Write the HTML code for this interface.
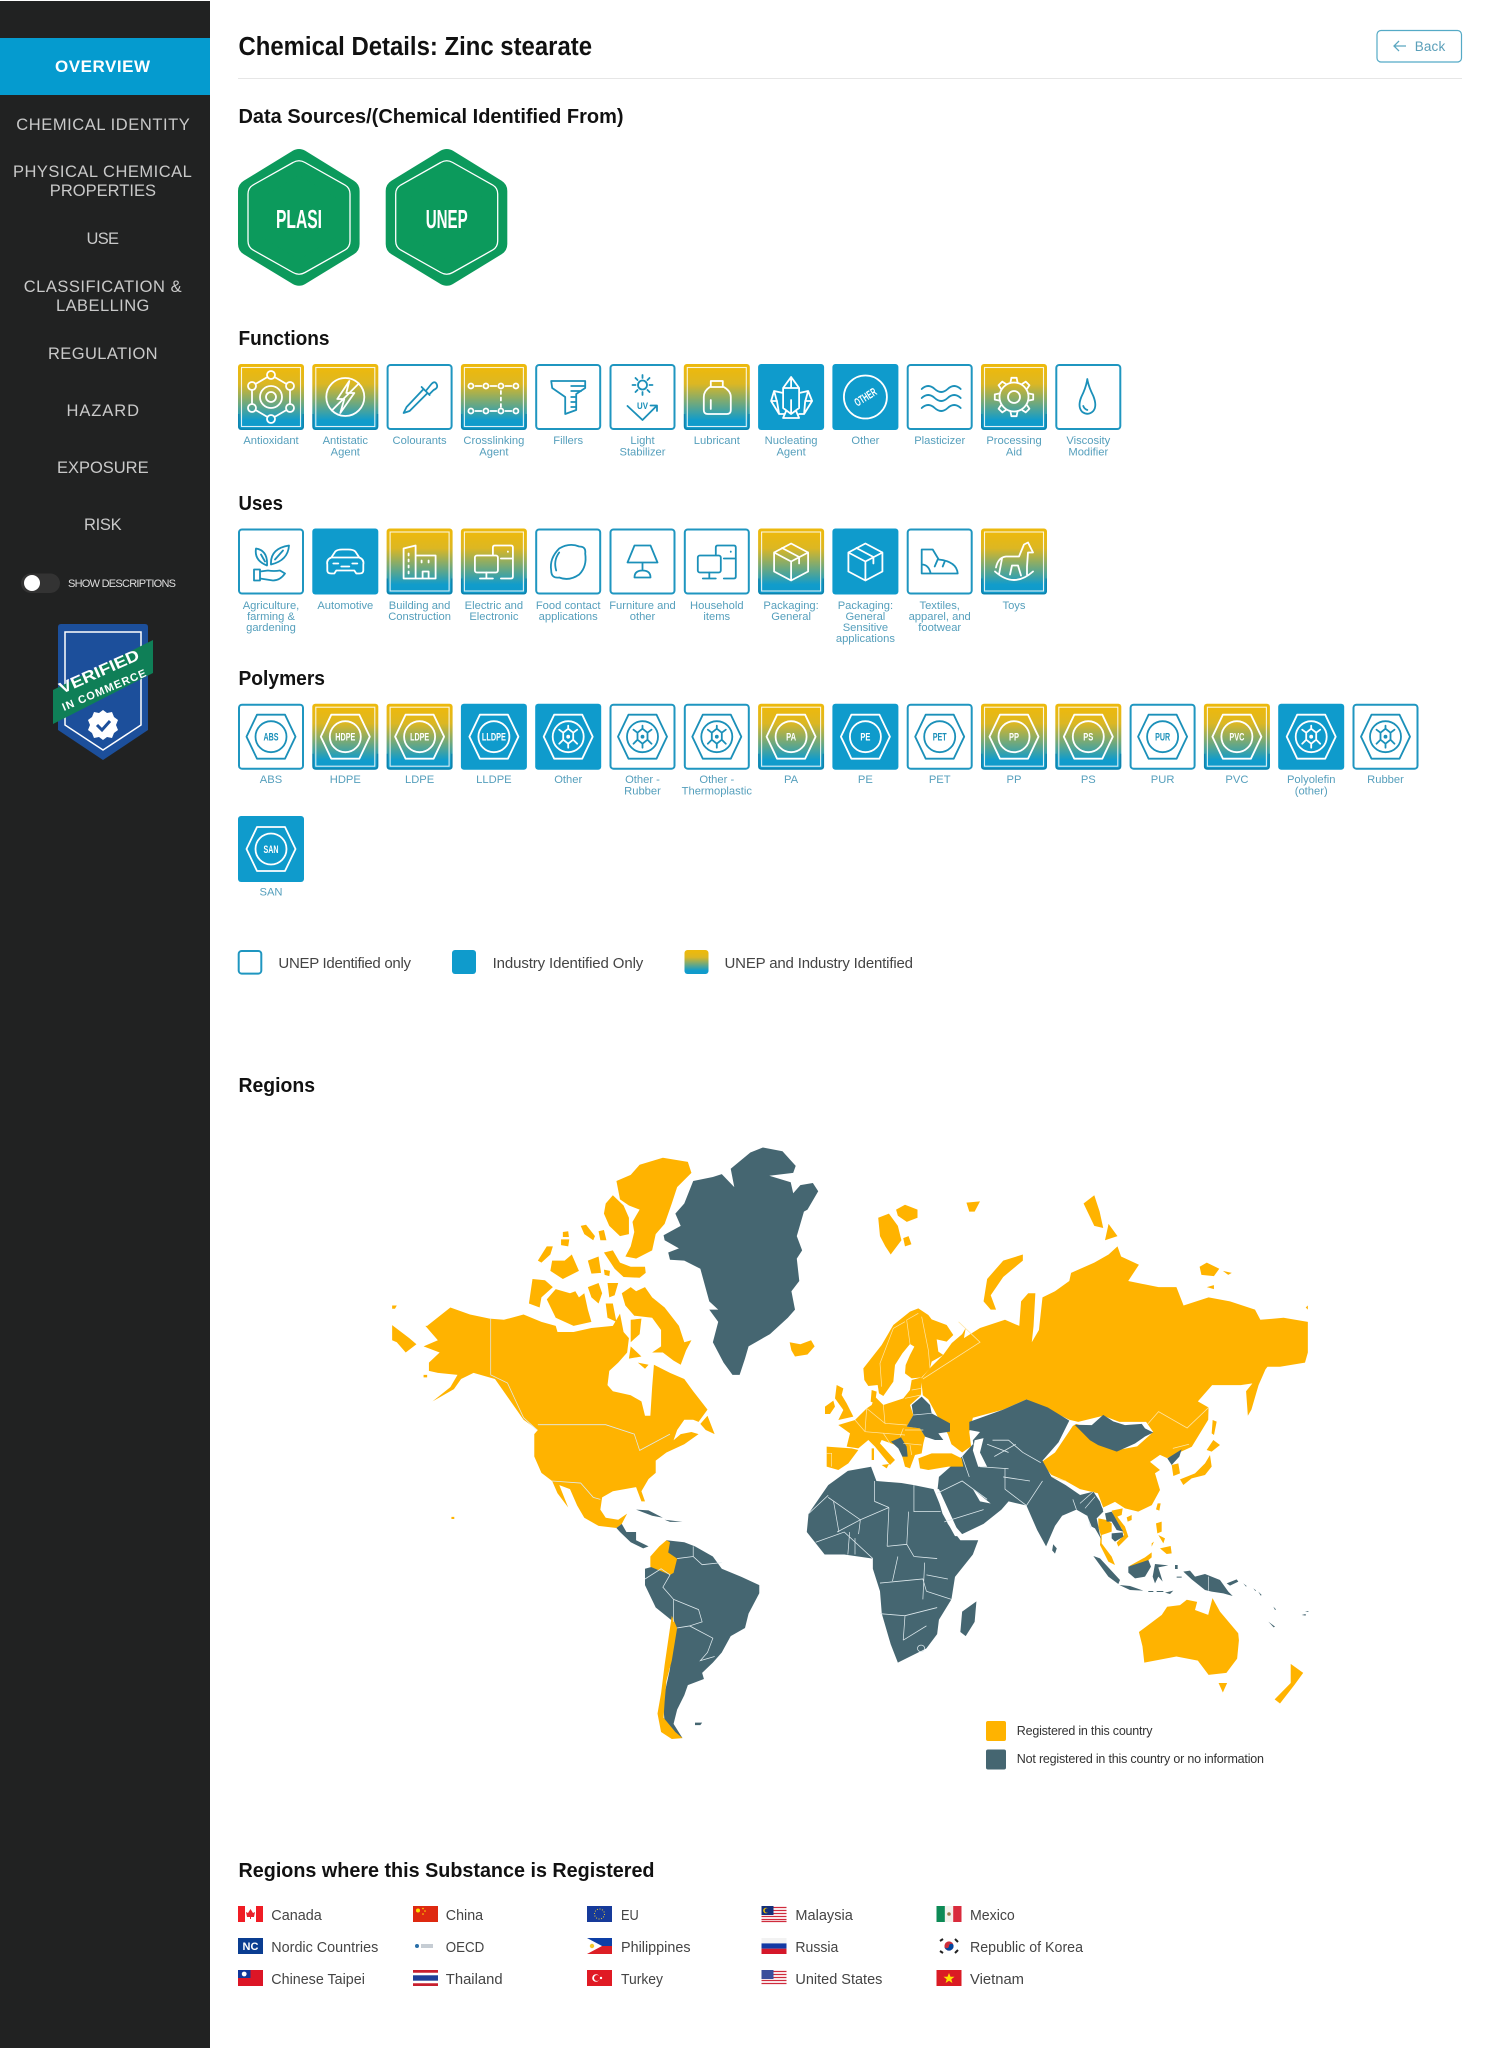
<!DOCTYPE html>
<html lang="en"><head><meta charset="utf-8"><title>Chemical Details: Zinc stearate</title>
<style>
html,body{margin:0;padding:0;background:#fff;width:1490px;height:2048px;overflow:hidden}
svg{display:block}
text{font-family:"Liberation Sans",Arial,sans-serif}
.nav{font-size:16.5px;fill:#c9c9c9}
.h{font-weight:700;fill:#111;font-size:20px}
.l{font-size:11.2px;fill:#559fbc;text-anchor:middle}
.lg{font-size:15px;fill:#444}
.r{font-size:15px;fill:#444}
.ic *{fill:none;stroke:currentColor;stroke-width:1.8;stroke-linejoin:round;stroke-linecap:round}
.nt{font-weight:700;font-size:11px;fill:currentColor;text-anchor:middle}
.w{color:#1b90b9}.c{color:#fff}
.bd{fill:none;stroke:#dfeaee;stroke-width:2}
.by{fill:none;stroke:#ffe6a8;stroke-width:2}
</style></head><body>
<svg width="1490" height="2048" viewBox="0 0 1490 2048" xmlns="http://www.w3.org/2000/svg">
<defs>
<linearGradient id="gr" x1="0" y1="0" x2="0" y2="1"><stop offset="0.08" stop-color="#ecb90e"/><stop offset="0.3" stop-color="#dcb723"/><stop offset="0.85" stop-color="#119ccb"/><stop offset="1" stop-color="#0f9acb"/></linearGradient>
<g id="tw"><rect x="1" y="1" width="64" height="64" rx="3" fill="#fff" stroke="#1f96c0" stroke-width="2"/></g>
<g id="tb"><rect x="0" y="0" width="66" height="66" rx="3" fill="#0f9bcc"/></g>
<g id="tg"><rect x="0" y="0" width="66" height="66" rx="3" fill="url(#gr)"/><rect x="3.5" y="3.5" width="59" height="59" fill="none" stroke="#fff" stroke-width="1.1" stroke-opacity=".85"/><path d="M0.8 50V62Q0.8 65.2 4 65.2H62Q65.2 65.2 65.2 62V50" fill="none" stroke="#0f83ac" stroke-width="1.4"/></g>

<g id="i1" class="ic"><circle cx="33" cy="33" r="5"/><circle cx="33" cy="33" r="11"/><circle cx="33" cy="11" r="4"/><circle cx="52" cy="22" r="4"/><circle cx="52" cy="44" r="4"/><circle cx="33" cy="55" r="4"/><circle cx="14" cy="44" r="4"/><circle cx="14" cy="22" r="4"/><path d="M36.5 13L48.5 20M52 26V40M48.5 46L36.5 53M29.5 53L17.5 46M14 40V26M17.5 20L29.5 13"/></g>
<g id="i2" class="ic"><circle cx="33" cy="33" r="19"/><path d="M19.5 46.5L46.5 19.5M37 17L25 35H32L28 49L42 29H34Z"/></g>
<g id="i3" class="ic"><path d="M37 25L20 43L17 49L23 47L41 29M35 23L43 31M40 26L44 21Q48 16 50 20Q52 24 47 26L43 30"/></g>
<g id="i4" class="ic"><circle cx="10" cy="22" r="2.5"/><circle cx="25" cy="22" r="2.5"/><circle cx="40" cy="22" r="2.5"/><circle cx="55" cy="22" r="2.5"/><circle cx="10" cy="47" r="2.5"/><circle cx="25" cy="47" r="2.5"/><circle cx="40" cy="47" r="2.5"/><circle cx="55" cy="47" r="2.5"/><path d="M14.5 22H20.5M29.5 22H35.5M44.5 22H50.5M14.5 47H20.5M29.5 47H35.5M44.5 47H50.5"/><path d="M40 27V43" stroke-dasharray="3 3.5"/></g>
<g id="i5" class="ic"><path d="M16 17H50V24L41 30V46L30 50V33L17 24ZM36 22H50M36 27H46M36 33H41M36 38H41M36 43H41"/></g>
<g id="i6" class="ic"><circle cx="33" cy="21" r="4.5"/><path d="M33 11V14M33 28V31M23 21H26M40 21H43M26 14L28 16M40 14L38 16M26 28L28 26M40 28L38 26M18 42L33 56L47 42M41 41.500H47.500V47"/><text x="33" y="45" class="nt" style="font-size:9.500px;fill:currentColor;stroke:none" textLength="11" lengthAdjust="spacingAndGlyphs">UV</text></g>
<g id="i7" class="ic"><path d="M27 23V17H39V23M26 23H40Q47 27 47 33V46Q47 50 43 50H24Q20 50 20 46V33Q20 27 26 23ZM27 36V45"/></g>
<g id="i8" class="ic"><path d="M33 13L41 24V44L33 50L25 44V24ZM25 24H41M33 13V24M33 36V50M25 29L16 27L13 37L21 50H26M41 29L50 27L54 37L46 50H41M16 27L19 38L21 50M50 27L47 38L46 50M13 37H19M54 37H47M28 47L25 54H41L38 47"/></g>
<g id="i9" class="ic"><circle cx="33" cy="33" r="21.500"/><text x="33" y="37" transform="rotate(-32 33 33)" class="nt" style="font-size:11.500px;fill:currentColor;stroke:none" textLength="24" lengthAdjust="spacingAndGlyphs">OTHER</text></g>
<g id="i10" class="ic"><path d="M15 25q6.500-6 13 0t13 0t13 0M15 34q6.500-6 13 0t13 0t13 0M15 44q6.500-6 13 0t13 0t13 0"/></g>
<g id="i11" class="ic"><circle cx="33" cy="33" r="6"/><circle cx="33" cy="33" r="14.500"/><g id="th"><path d="M29.400 18.800L30.400 13.800H35.600L36.600 18.800"/></g><use href="#th" transform="rotate(45 33 33)"/><use href="#th" transform="rotate(90 33 33)"/><use href="#th" transform="rotate(135 33 33)"/><use href="#th" transform="rotate(180 33 33)"/><use href="#th" transform="rotate(225 33 33)"/><use href="#th" transform="rotate(270 33 33)"/><use href="#th" transform="rotate(315 33 33)"/></g>
<g id="i12" class="ic"><path d="M32 15Q33 22 38 32Q42 42 38 47Q33 52 27 48Q22 43 26 33Q31 23 32 15ZM28 42Q29 45 32 46"/></g>

<g id="u1" class="ic"><path d="M29 37Q16 32 18 20Q30 22 29 37ZM33 36Q32 20 51 17Q50 32 33 36ZM16 41H22V52H16ZM22 43L30 42Q36 43 42 42L47 45Q42 52 35 52L22 50M23 26L27 33M45 22L37 31"/></g>
<g id="u2" class="ic"><path d="M15 36Q14 31 19 29L23 23Q25 21 30 21H36Q41 21 43 23L47 29Q52 31 51 36V42Q51 45 47 45H44L42 42H24L22 45H19Q15 45 15 42ZM20 29H46M21 35H26M40 35H45M29 38H37"/></g>
<g id="u3" class="ic"><path d="M17 50V20L29 17V50M29 27H49V50H17M36 50V43H42V50"/><path d="M22 25V46" stroke-dasharray="2 4"/><path d="M35 32V38M42 32V38" stroke-dasharray="2 4"/></g>
<g id="u4" class="ic"><rect x="14" y="27" width="23" height="17" rx="2"/><path d="M25.500 44V50M19 50H32M32 26V19Q32 17 34 17H50Q52 17 52 19V48Q52 50 50 50H40M40 30H52M47 23V23.400"/></g>
<g id="u5" class="ic"><path d="M24 20Q34 14 44 18Q51 18 50 25Q52 38 44 46Q34 53 24 49Q16 50 16 42Q14 30 24 20ZM24 24Q18 32 21 42"/></g>
<g id="u6" class="ic"><path d="M25 17H41L48 34H18ZM33 34V42M25 49Q25 42 33 42Q41 42 41 49Z"/></g>
<g id="u7" class="ic"><path d="M33 15L50 24V43L33 52L16 43V24ZM16 24L33 33L50 24M33 33V52M24 19.500L41 28.500V35"/></g>
<g id="u8" class="ic"><path d="M15 21H26L32 31Q50 33 51 45H15ZM15 36Q22 36 24 45M31 31L28 38M38 33L36 38"/></g>
<g id="u9" class="ic"><path d="M15 39Q17 29 25 28H38L43 16L47 14L52 24L47 24L46 38V46M21 30L18 46M29 46L31 37H37L40 47M14 43Q33 60 52 43"/></g>

<g id="n" class="ic"><path d="M8.500 33L19 11H47L57.500 33L47 55H19Z"/><circle cx="33" cy="33" r="15.500"/></g>
<g id="m" class="ic"><path d="M8.500 33L19 11H47L57.500 33L47 55H19Z"/><circle cx="33" cy="33" r="15.500"/><path d="M33 25L38 29V36L33 40L28 36V29ZM28 29L24 26M38 29L42 26M28 36L24 40M38 36L42 40M33 25V22M33 40V44"/><circle cx="33" cy="33" r="1"/></g>

<polygon id="hx" points="61,12 109.600,42 109.600,95 61,124.700 12,95 12,42" fill="#0c9a5c" stroke="#0c9a5c" stroke-width="24" stroke-linejoin="round"/>
<path id="hi" d="M55 13.500Q61 10 67 13.500L107 36Q112 39 112 45V92Q112 98 107 101L67 123.500Q61 127 55 123.500L15 101Q10 98 10 92V45Q10 39 15 36Z" fill="none" stroke="#fff" stroke-width="1.300"/>
</defs>

<rect width="1490" height="2048" fill="#fff"/>
<rect x="0" y="1" width="210" height="2047" fill="#212222"/>
<rect x="0" y="38" width="210" height="57" fill="#059bcf"/>
<text x="55" y="72" font-size="17" font-weight="700" fill="#fff" textLength="95">OVERVIEW</text>
<text class="nav" x="16.300" y="130" textLength="173.500">CHEMICAL IDENTITY</text>
<text class="nav" x="13" y="177" textLength="178.800">PHYSICAL CHEMICAL</text>
<text class="nav" x="49.800" y="196" textLength="106.200">PROPERTIES</text>
<text class="nav" x="86.500" y="244" textLength="32.500">USE</text>
<text class="nav" x="23.700" y="292" textLength="157.900">CLASSIFICATION &amp;</text>
<text class="nav" x="56" y="311" textLength="93.400">LABELLING</text>
<text class="nav" x="48" y="359" textLength="109.600">REGULATION</text>
<text class="nav" x="66.500" y="416" textLength="72.500">HAZARD</text>
<text class="nav" x="57" y="473" textLength="91.600">EXPOSURE</text>
<text class="nav" x="84" y="530" textLength="37.600">RISK</text>
<rect x="21" y="573.500" width="39" height="19.500" rx="9.750" fill="#333"/>
<circle cx="32" cy="583" r="8" fill="#fff"/>
<text x="68" y="587" font-size="11" fill="#dedede" textLength="108">SHOW DESCRIPTIONS</text>

<path d="M61 624H145Q148 624 148 627V730L103 760L58 730V627Q58 624 61 624Z" fill="#1c4f9b"/>
<path d="M65 632H141V725L103 750L65 725Z" fill="none" stroke="#fff" stroke-width="1.500"/>
<path d="M53 690L153 640V673L53 724Z" fill="#0f7f57"/>
<text x="62" y="694" transform="rotate(-24 62 694)" font-size="16" font-weight="700" fill="#fff" textLength="86" lengthAdjust="spacingAndGlyphs">VERIFIED</text>
<text x="64" y="711" transform="rotate(-23 64 711)" font-size="11" font-weight="700" fill="#fff" textLength="90">IN COMMERCE</text>
<path d="M103 710L107 713L112 712L114 717L118 720L116 725L118 730L114 733L112 738L107 737L103 740L99 737L94 738L92 733L88 730L90 725L88 720L92 717L94 712L99 713Z" fill="#fff"/>
<path d="M97 725L102 730L110 721" fill="none" stroke="#1c4f9b" stroke-width="3"/>

<text x="238.500" y="55" font-size="25.500" font-weight="700" fill="#111" textLength="353.500" lengthAdjust="spacingAndGlyphs">Chemical Details: Zinc stearate</text>
<rect x="238" y="78" width="1224" height="1" fill="#e6e6e6"/>
<rect x="1377" y="30.500" width="84.500" height="31.500" rx="4" fill="#fff" stroke="#55aac6" stroke-width="1.200"/>
<path d="M1406 46H1394M1399 41L1394 46L1399 51" fill="none" stroke="#5aa6c0" stroke-width="1.300"/>
<text x="1414.700" y="51" font-size="13.500" fill="#5a9fb9" textLength="30.500">Back</text>

<text class="h" x="238.500" y="123" textLength="385" lengthAdjust="spacingAndGlyphs">Data Sources/(Chemical Identified From)</text>
<g transform="translate(238 149)"><use href="#hx"/><use href="#hi"/><text x="38" y="79" font-size="26" font-weight="700" fill="#fff" textLength="46" lengthAdjust="spacingAndGlyphs">PLASI</text></g>
<g transform="translate(385.700 149)"><use href="#hx"/><use href="#hi"/><text x="40" y="79" font-size="26" font-weight="700" fill="#fff" textLength="42" lengthAdjust="spacingAndGlyphs">UNEP</text></g>

<text class="h" x="238.500" y="345" textLength="91" lengthAdjust="spacingAndGlyphs">Functions</text>
<g transform="translate(238 364)">
<g class="c" transform="translate(0 0)"><use href="#tg"/><use href="#i1"/></g>
<g class="c" transform="translate(74.300 0)"><use href="#tg"/><use href="#i2"/></g>
<g class="w" transform="translate(148.600 0)"><use href="#tw"/><use href="#i3"/></g>
<g class="c" transform="translate(222.900 0)"><use href="#tg"/><use href="#i4"/></g>
<g class="w" transform="translate(297.200 0)"><use href="#tw"/><use href="#i5"/></g>
<g class="w" transform="translate(371.500 0)"><use href="#tw"/><use href="#i6"/></g>
<g class="c" transform="translate(445.800 0)"><use href="#tg"/><use href="#i7"/></g>
<g class="c" transform="translate(520.100 0)"><use href="#tb"/><use href="#i8"/></g>
<g class="c" transform="translate(594.400 0)"><use href="#tb"/><use href="#i9"/></g>
<g class="w" transform="translate(668.700 0)"><use href="#tw"/><use href="#i10"/></g>
<g class="c" transform="translate(743 0)"><use href="#tg"/><use href="#i11"/></g>
<g class="w" transform="translate(817.300 0)"><use href="#tw"/><use href="#i12"/></g>
</g>
<g>
<text class="l" x="271" y="444">Antioxidant</text>
<text class="l" x="345.300" y="444">Antistatic</text><text class="l" x="345.300" y="455.500">Agent</text>
<text class="l" x="419.600" y="444">Colourants</text>
<text class="l" x="493.900" y="444">Crosslinking</text><text class="l" x="493.900" y="455.500">Agent</text>
<text class="l" x="568.200" y="444">Fillers</text>
<text class="l" x="642.500" y="444">Light</text><text class="l" x="642.500" y="455.500">Stabilizer</text>
<text class="l" x="716.800" y="444">Lubricant</text>
<text class="l" x="791.100" y="444">Nucleating</text><text class="l" x="791.100" y="455.500">Agent</text>
<text class="l" x="865.400" y="444">Other</text>
<text class="l" x="939.700" y="444">Plasticizer</text>
<text class="l" x="1014" y="444">Processing</text><text class="l" x="1014" y="455.500">Aid</text>
<text class="l" x="1088.300" y="444">Viscosity</text><text class="l" x="1088.300" y="455.500">Modifier</text>
</g>

<text class="h" x="238.500" y="510" textLength="44.500" lengthAdjust="spacingAndGlyphs">Uses</text>
<g transform="translate(238 528.500)">
<g class="w" transform="translate(0 0)"><use href="#tw"/><use href="#u1"/></g>
<g class="c" transform="translate(74.300 0)"><use href="#tb"/><use href="#u2"/></g>
<g class="c" transform="translate(148.600 0)"><use href="#tg"/><use href="#u3"/></g>
<g class="c" transform="translate(222.900 0)"><use href="#tg"/><use href="#u4"/></g>
<g class="w" transform="translate(297.200 0)"><use href="#tw"/><use href="#u5"/></g>
<g class="w" transform="translate(371.500 0)"><use href="#tw"/><use href="#u6"/></g>
<g class="w" transform="translate(445.800 0)"><use href="#tw"/><use href="#u4"/></g>
<g class="c" transform="translate(520.100 0)"><use href="#tg"/><use href="#u7"/></g>
<g class="c" transform="translate(594.400 0)"><use href="#tb"/><use href="#u7"/></g>
<g class="w" transform="translate(668.700 0)"><use href="#tw"/><use href="#u8"/></g>
<g class="c" transform="translate(743 0)"><use href="#tg"/><use href="#u9"/></g>
</g>
<g>
<text class="l" x="271" y="609">Agriculture,</text><text class="l" x="271" y="620">farming &amp;</text><text class="l" x="271" y="631">gardening</text>
<text class="l" x="345.300" y="609">Automotive</text>
<text class="l" x="419.600" y="609">Building and</text><text class="l" x="419.600" y="620">Construction</text>
<text class="l" x="493.900" y="609">Electric and</text><text class="l" x="493.900" y="620">Electronic</text>
<text class="l" x="568.200" y="609">Food contact</text><text class="l" x="568.200" y="620">applications</text>
<text class="l" x="642.500" y="609">Furniture and</text><text class="l" x="642.500" y="620">other</text>
<text class="l" x="716.800" y="609">Household</text><text class="l" x="716.800" y="620">items</text>
<text class="l" x="791.100" y="609">Packaging:</text><text class="l" x="791.100" y="620">General</text>
<text class="l" x="865.400" y="609">Packaging:</text><text class="l" x="865.400" y="620">General</text><text class="l" x="865.400" y="631">Sensitive</text><text class="l" x="865.400" y="642">applications</text>
<text class="l" x="939.700" y="609">Textiles,</text><text class="l" x="939.700" y="620">apparel, and</text><text class="l" x="939.700" y="631">footwear</text>
<text class="l" x="1014" y="609">Toys</text>
</g>

<text class="h" x="238.500" y="685" textLength="86.500" lengthAdjust="spacingAndGlyphs">Polymers</text>
<g transform="translate(238 703.700)">
<g class="w" transform="translate(0 0)"><use href="#tw"/><use href="#n"/><text class="nt" x="33" y="37" textLength="15" lengthAdjust="spacingAndGlyphs">ABS</text></g>
<g class="c" transform="translate(74.300 0)"><use href="#tg"/><use href="#n"/><text class="nt" x="33" y="37" textLength="20" lengthAdjust="spacingAndGlyphs">HDPE</text></g>
<g class="c" transform="translate(148.600 0)"><use href="#tg"/><use href="#n"/><text class="nt" x="33" y="37" textLength="19" lengthAdjust="spacingAndGlyphs">LDPE</text></g>
<g class="c" transform="translate(222.900 0)"><use href="#tb"/><use href="#n"/><text class="nt" x="33" y="37" textLength="24" lengthAdjust="spacingAndGlyphs">LLDPE</text></g>
<g class="c" transform="translate(297.200 0)"><use href="#tb"/><use href="#m"/></g>
<g class="w" transform="translate(371.500 0)"><use href="#tw"/><use href="#m"/></g>
<g class="w" transform="translate(445.800 0)"><use href="#tw"/><use href="#m"/></g>
<g class="c" transform="translate(520.100 0)"><use href="#tg"/><use href="#n"/><text class="nt" x="33" y="37" textLength="10" lengthAdjust="spacingAndGlyphs">PA</text></g>
<g class="c" transform="translate(594.400 0)"><use href="#tb"/><use href="#n"/><text class="nt" x="33" y="37" textLength="10" lengthAdjust="spacingAndGlyphs">PE</text></g>
<g class="w" transform="translate(668.700 0)"><use href="#tw"/><use href="#n"/><text class="nt" x="33" y="37" textLength="14" lengthAdjust="spacingAndGlyphs">PET</text></g>
<g class="c" transform="translate(743 0)"><use href="#tg"/><use href="#n"/><text class="nt" x="33" y="37" textLength="10" lengthAdjust="spacingAndGlyphs">PP</text></g>
<g class="c" transform="translate(817.300 0)"><use href="#tg"/><use href="#n"/><text class="nt" x="33" y="37" textLength="10" lengthAdjust="spacingAndGlyphs">PS</text></g>
<g class="w" transform="translate(891.600 0)"><use href="#tw"/><use href="#n"/><text class="nt" x="33" y="37" textLength="15" lengthAdjust="spacingAndGlyphs">PUR</text></g>
<g class="c" transform="translate(965.900 0)"><use href="#tg"/><use href="#n"/><text class="nt" x="33" y="37" textLength="15" lengthAdjust="spacingAndGlyphs">PVC</text></g>
<g class="c" transform="translate(1040.200 0)"><use href="#tb"/><use href="#m"/></g>
<g class="w" transform="translate(1114.500 0)"><use href="#tw"/><use href="#m"/></g>
<g class="c" transform="translate(0 112.300)"><use href="#tb"/><use href="#n"/><text class="nt" x="33" y="37" textLength="15" lengthAdjust="spacingAndGlyphs">SAN</text></g>
</g>
<g>
<text class="l" x="271" y="783">ABS</text>
<text class="l" x="345.300" y="783">HDPE</text>
<text class="l" x="419.600" y="783">LDPE</text>
<text class="l" x="493.900" y="783">LLDPE</text>
<text class="l" x="568.200" y="783">Other</text>
<text class="l" x="642.500" y="783">Other -</text><text class="l" x="642.500" y="794.300">Rubber</text>
<text class="l" x="716.800" y="783">Other -</text><text class="l" x="716.800" y="794.300">Thermoplastic</text>
<text class="l" x="791.100" y="783">PA</text>
<text class="l" x="865.400" y="783">PE</text>
<text class="l" x="939.700" y="783">PET</text>
<text class="l" x="1014" y="783">PP</text>
<text class="l" x="1088.300" y="783">PS</text>
<text class="l" x="1162.600" y="783">PUR</text>
<text class="l" x="1236.900" y="783">PVC</text>
<text class="l" x="1311.200" y="783">Polyolefin</text><text class="l" x="1311.200" y="794.300">(other)</text>
<text class="l" x="1385.500" y="783">Rubber</text>
<text class="l" x="271" y="895.500">SAN</text>
</g>

<rect x="238.700" y="951" width="22.600" height="22.600" rx="3" fill="#fff" stroke="#1f96c0" stroke-width="2"/>
<text class="lg" x="278.400" y="968" textLength="132.600">UNEP Identified only</text>
<rect x="452" y="950" width="24" height="24" rx="3" fill="#0f9bcc"/>
<text class="lg" x="492.600" y="968" textLength="150.700">Industry Identified Only</text>
<rect x="684.500" y="950" width="24" height="24" rx="3" fill="url(#gr)"/>
<text class="lg" x="724.500" y="968" textLength="188.500">UNEP and Industry Identified</text>

<text class="h" x="238.500" y="1092" textLength="76.500" lengthAdjust="spacingAndGlyphs">Regions</text>

<!-- MAP: Americas -->
<g transform="translate(370 1130) scale(.35714 .40816)">
<path fill="#456671" d="M1065 55L1100 43L1155 52L1192 88L1185 105L1118 112L1178 128L1185 155L1205 135L1240 130L1255 150L1225 195L1215 200L1195 260L1210 295L1195 315L1202 370L1180 395L1190 440L1170 460L1120 500L1060 530L1050 560L1035 600L1015 600L990 570L960 520L975 470L950 440L975 440L950 420L925 340L880 320L840 318L835 300L865 290L825 270L822 258L870 235L855 205L880 180L905 125L960 115L985 108L1020 140L1010 95Z"/>
<path fill="#ffb300" d="M755 85L820 68L890 78L900 105L860 140L845 180L825 230L800 255L790 295L745 315L715 310L730 285L740 250L735 225L755 195L725 185L700 170L690 125L730 110Z
M660 180L680 160L710 185L725 215L725 255L700 260L670 235L655 205Z
M590 235L605 232L630 260L625 270L600 255ZM640 248L655 245L662 270L645 270ZM540 250L555 248L557 262L540 262ZM535 268L558 268L555 285L535 282Z
M655 300L680 295L700 325L730 335L770 335L772 350L755 362L710 360L685 340ZM470 320L495 285L512 285L505 305L480 325ZM510 320L545 320L565 305L585 345L540 365L505 345ZM610 320L640 310L647 350L620 352ZM655 342L672 345L670 358L657 355Z
M455 365L490 368L512 385L480 410L475 435L445 425ZM495 415L520 390L560 400L575 395L585 410L600 400L610 440L620 470L570 480L520 460ZM610 385L640 375L650 400L640 425L620 410ZM665 375L695 375L685 405L670 410Z
M705 400L730 385L745 395L770 385L790 410L825 435L865 480L880 520L900 515L885 540L870 575L850 565L820 545L790 545L815 530L815 490L790 460L740 455L715 430ZM660 425L680 425L690 470L665 460ZM730 465L760 462L755 500L730 520ZM730 530L760 555L725 560ZM750 570L780 575L770 585Z
M160 480L225 435L280 452L335 462L375 465L430 452L480 470L520 480L525 495L570 495L620 485L680 480L700 450L710 495L725 510L720 545L695 570L670 590L665 625L680 640L730 650L760 665L770 700L785 700L790 630L795 575L840 595L880 610L905 640L945 685L920 715L905 710L880 710L860 735L850 760L870 745L900 740L920 745L880 770L830 790L800 810L800 840L780 855L760 885L770 910L760 910L745 875L680 885L650 900L645 930L660 950L695 955L720 940L705 965L690 975L640 970L600 950L580 920L560 880L530 870L555 925L525 890L510 860L480 840L460 800L460 745L470 735L430 710L390 660L350 610L290 595L255 610L235 635L175 665L225 630L245 600L190 595L165 590L165 570L195 545L150 530L190 515L155 480Z
M62 478L110 510L130 525L100 545L75 520L62 515ZM62 430L75 430L70 438L62 438ZM925 720L945 700L965 745L940 735ZM1175 520L1205 525L1235 515L1245 530L1225 550L1190 555L1180 540ZM150 600L160 600L160 606L150 606ZM228 948h8v5h-8Z"/>
<circle cx="797" cy="495" r="7" fill="#fff"/>
<path class="bd" d="M338 462V600L385 620L430 705L468 735M470 722H660L740 745L755 785L840 745M510 860L590 865L625 900L645 905"/>
<path fill="#456671" d="M690 975L705 965L718 985L745 985L745 1005L780 1020L765 1025L730 1010L700 985ZM745 930L780 932L820 950L790 945ZM825 955L875 960L840 960ZM910 1452L930 1452L925 1458L910 1458Z
M830 1005L880 1010L910 1020L960 1045L985 1075L1040 1095L1090 1115L1090 1135L1060 1185L1050 1220L1010 1240L985 1280L960 1305L930 1330L935 1345L890 1360L880 1385L860 1420L850 1455L875 1490L850 1480L825 1450L820 1400L840 1320L850 1205L800 1170L770 1115L770 1075L790 1070L830 1010Z"/>
<path fill="#ffb300" d="M785 1045L810 1020L830 1005L840 1010L835 1035L860 1050L850 1085L840 1090L785 1070Z
M845 1190L860 1220L845 1300L830 1350L825 1400L822 1440L855 1475L875 1490L845 1492L815 1475L805 1430L815 1380L825 1310Z"/>
<path class="bd" d="M770 1100L815 1075L840 1090L820 1120L850 1150L850 1205M850 1150L920 1175L930 1205L895 1215L960 1245L945 1280L925 1300L965 1290M860 1220L895 1215M860 1050L905 1045L930 1065L985 1060M905 1020L905 1045"/>
</g>

<!-- MAP: Eurasia/Africa/Oceania -->
<g transform="translate(780 1130) scale(.35714 .40816)">
<path fill="#ffb300" d="M275 215L305 205L330 235L340 270L310 305L295 285L280 260ZM325 195L350 183L385 195L385 215L355 225L330 210ZM345 265L360 260L368 280L350 285ZM522 178L560 175L545 200L530 200Z
M570 420L580 365L625 320L680 305L680 320L625 360L590 405L605 440L590 440Z
M850 180L880 160L895 200L905 240L880 235ZM920 230L945 260L910 270ZM1175 335L1195 325L1230 340L1215 358L1180 355ZM1240 345L1265 350L1255 355ZM1195 385L1215 380L1215 390ZM1472 435L1478 430L1478 440Z
M420 583L457 551L481 522L510 500L520 485L515 510L560 485L630 465L670 480L675 420L695 400L715 400L710 480L705 520L725 490L735 410L770 395L810 370L815 350L880 325L920 305L945 285L955 310L1005 330L975 370L1060 385L1110 385L1130 430L1200 410L1260 420L1330 440L1345 465L1410 460L1478 470L1478 545L1470 570L1400 580L1365 580L1330 620L1290 625L1210 625L1170 665L1200 680L1199 710L1153 776L1084 804L1064 796L1036 813L1064 833L1050 841L1064 882L1041 919L1003 935L966 927L938 911L905 925L890 890L840 880L800 860L760 845L730 815L770 790L820 725L830 720L890 740L940 785L1000 775L1045 740L1025 715L950 715L905 700L835 715L810 710L740 680L690 660L625 685L540 705L530 740L535 775L510 790L480 770L470 745L440 700L415 660L400 650L395 610Z
M1305 640L1365 575L1340 625L1320 685L1310 700Z
M1005 1230L1069 1188L1084 1168L1120 1164L1139 1151L1168 1156L1162 1176L1199 1188L1211 1147L1232 1180L1283 1233L1285 1250L1280 1295L1250 1330L1200 1335L1170 1300L1110 1290L1020 1305L1015 1265ZM1228 1355L1252 1355L1240 1378ZM1430 1308L1465 1330L1440 1360L1400 1405L1385 1395L1430 1355Z"/>
<path class="by" d="M500 470L560 520L400 610M740 845L800 860M1200 680L1140 730L1060 690L1030 720M1145 770L1100 780"/>
<path fill="#456671" d="M530 715L625 685L690 660L750 680L810 712L780 765L735 810L760 850L800 870L850 900L880 890L905 930L880 925L860 945L830 930L790 945L770 970L745 1020L720 980L690 920L640 910L620 930L570 965L510 990L480 960L440 890L445 850L510 800L540 770L575 815L575 830L545 800L540 760L560 740L530 735Z
M825 722L873 723L905 698L933 714L966 723L1013 720L1022 731L1045 741L1022 751L994 768L943 788L891 772L868 760Z
M80 940L135 870L190 835L255 825L270 860L340 865L375 870L430 880L470 965L505 1005L555 1005L540 1040L490 1095L480 1150L445 1200L440 1235L410 1270L330 1305L310 1260L285 1185L280 1130L260 1075L260 1050L180 1040L125 1040L75 985Z
M505 1230L510 1180L550 1155L545 1205L520 1240ZM765 1015L775 1025L770 1038L762 1030Z"/>
<path fill="#fff" d="M545 760L570 755L560 790L580 825L555 825L540 785ZM540 880L590 915L560 910ZM435 880L445 880L505 995L490 995L455 940Z"/>
<path class="bd" d="M135 900L225 955M150 910L165 985M265 860L265 910L305 925M375 870V935H450M305 925L300 1020M225 955L305 925M80 940L135 895M160 985L225 955L220 990M190 1040L195 985M300 1020L355 1015L375 1045M355 1015L360 935M440 1050L375 1045M280 1110L400 1100L410 1130M280 1185L350 1190L345 1250M350 1190L440 1170M330 1045L315 1105M405 1060L400 1150M470 1100L410 1090M100 1010L180 985L260 1050M210 1000V1040M410 1130L480 1150M345 1250L410 1215M395 1262a10 8 0 1 0 .1 0M595 760H640L680 790M630 830V880L690 920M560 825L640 830M680 790L730 815M735 860L690 920M440 890L510 860L580 905M510 800L530 850M460 960L570 930M580 770L640 790M850 900L870 975M820 905L830 930M600 800L660 770M625 850L700 860"/>
</g>

<!-- MAP: Europe detail -->
<g transform="translate(815 1290) scale(.33333)">
<path fill="#ffb300" d="M145 235L200 165L235 105L285 65L310 55L340 75L350 88L395 105L415 135L395 155L365 148L370 185L385 195L350 215L345 235L320 262L290 265L270 250L272 225L285 195L298 170L285 162L262 190L240 225L235 275L205 318L192 310L188 285L160 288L148 270Z
M290 270L320 262L318 315L285 345L265 325L285 300Z
M70 405L120 390L135 375L155 355L170 345L180 320L205 345L265 325L285 345L295 375L275 410L315 415L330 440L325 460L320 490L300 495L285 535L270 530L262 500L255 470L200 450L195 460L240 510L225 525L180 470L160 450L130 475L95 470L105 430Z
M170 300L185 305L180 340L167 335Z
M35 470L110 475L130 480L100 520L70 540L35 530Z
M65 285L85 295L80 315L95 340L115 380L70 390L85 360L60 325ZM30 350L55 332L60 350L45 372L30 372Z
M170 475L177 475L177 510L170 510ZM200 525L222 522L215 535Z
M310 505L350 490L410 490L440 505L445 530L400 530L340 540L315 535Z"/>
<path fill="#456671" d="M290 345L320 320L345 345L350 370L405 400L405 425L370 430L385 450L360 450L330 440L315 415L275 410L295 375Z
M228 455L258 442L275 470L278 500L262 500L250 475Z"/>
<path class="by" d="M200 290L195 220L235 115L270 95M285 162L275 90L310 70M345 235L340 180L320 80M290 300L320 295M270 325L318 315M155 355L150 425M155 355L210 400L205 345M210 400L275 405M150 425L270 435M205 430L225 460M265 415L255 440M270 420L325 420M265 460L320 465M120 390L150 425M35 490L50 490V530M285 465L290 495"/>
<path class="bd" d="M295 375L350 370"/>
</g>

<!-- MAP: SE Asia detail -->
<g transform="translate(1080 1420) scale(.33333)">
<path fill="#ffb300" d="M300 178L345 160L375 130L390 105L395 140L375 165L335 175L310 195ZM380 90L400 60L420 75L395 95ZM398 0L410 5L402 45L395 40Z
M275 135L295 130L300 160L280 168ZM233 250L242 250L238 272L228 268Z
M228 310L245 305L245 335L232 340ZM235 345L255 355L250 370ZM240 385L272 378L275 400L260 402ZM215 370L222 365L215 380Z
M148 438L195 412L215 397L215 412L200 425L165 440Z
M55 295L80 300L95 310L95 335L80 340L65 345L65 370L95 410L105 435L85 425L60 375L62 345L55 320Z
M95 272L128 265L125 285L112 290L135 320L145 350L115 380L110 368L132 345L125 325L105 300ZM140 292L155 285L155 300L143 305Z"/>
<path fill="#456671" d="M262 115L305 88L298 110L275 135Z
M0 225L40 215L60 245L70 275L50 295L55 320L60 345L65 360L45 325L35 320L15 270L0 265Z
M75 280L95 275L115 310L130 335L110 330L95 305L80 305ZM95 340L128 337L130 350L105 365L95 355Z
M145 440L205 420L213 440L195 470L165 475L145 458Z
M40 408L60 415L120 480L115 492L85 470ZM118 495L150 498L190 512L150 510Z
M225 432L265 436L235 442L248 485L235 470L225 490L218 470Z
M205 513h15v3h-15ZM230 513h20v3h-20ZM255 518L280 512L270 522ZM285 435h8v12h-8ZM290 470h15v3h-15Z
M310 455L330 452L345 470L375 462L420 480L445 515L458 528L430 520L395 515L375 510L335 478Z
M440 490L470 478L475 485L450 497ZM490 490l10 8-2 2ZM520 505l8 6-2 2ZM535 515l10 10-3 2ZM580 560l8 8-3 2ZM565 605l20 15-4 2ZM665 585l12-3 0 5ZM675 575l10-2 0 3Z"/>
<path class="bd" d="M385 470V512M0 250L40 215M15 265L45 230"/>
</g>

<rect x="986" y="1721" width="20" height="20" rx="2" fill="#ffb300"/>
<text x="1016.800" y="1735" font-size="12.500" fill="#333" textLength="135.700">Registered in this country</text>
<rect x="986" y="1749.500" width="20" height="20" rx="2" fill="#456671"/>
<text x="1016.800" y="1763" font-size="12.500" fill="#333" textLength="247.200">Not registered in this country or no information</text>

<text class="h" x="238.500" y="1877" textLength="416" lengthAdjust="spacingAndGlyphs">Regions where this Substance is Registered</text>

<!-- row 1 flags -->
<g><rect x="238" y="1906" width="25" height="16" fill="#fff"/><rect x="238" y="1906" width="7" height="16" fill="#f01c24"/><rect x="256" y="1906" width="7" height="16" fill="#f01c24"/><path d="M250.500 1909L253 1913L255 1912L254 1917H251V1919H250V1917H247L246 1912L248 1913Z" fill="#e8202a"/></g>
<g><rect x="413" y="1906" width="25" height="16" fill="#de2910"/><circle cx="418" cy="1910.500" r="2" fill="#ffde00"/><circle cx="423" cy="1908.500" r=".8" fill="#ffde00"/><circle cx="425" cy="1911" r=".8" fill="#ffde00"/><circle cx="423" cy="1914" r=".8" fill="#ffde00"/></g>
<g><rect x="587" y="1906" width="25" height="16" fill="#163a9a"/><circle cx="599.500" cy="1914" r="5" fill="none" stroke="#e9c930" stroke-width="1" stroke-dasharray="1 1.600"/></g>
<g><rect x="761.500" y="1906" width="25" height="16" fill="#fff"/><path d="M761.500 1907.500h25M761.500 1910.500h25M761.500 1913.500h25M761.500 1916.500h25M761.500 1919.500h25M761.500 1921.500h25" stroke="#cf2b3c" stroke-width="1.300"/><rect x="761.500" y="1906" width="12" height="9" fill="#14307a"/><circle cx="766" cy="1910.500" r="2.800" fill="#f4c400"/><circle cx="767" cy="1910.500" r="2.300" fill="#14307a"/></g>
<g><rect x="936.500" y="1906" width="8.400" height="16" fill="#0d8a56"/><rect x="944.900" y="1906" width="8.300" height="16" fill="#f4f1ec"/><rect x="953.200" y="1906" width="8.300" height="16" fill="#d92b3c"/><circle cx="949" cy="1914" r="1.800" fill="#9a7b4a"/></g>
<text class="r" x="271.300" y="1920" textLength="50.500" lengthAdjust="spacingAndGlyphs">Canada</text>
<text class="r" x="445.800" y="1920" textLength="37.300" lengthAdjust="spacingAndGlyphs">China</text>
<text class="r" x="621" y="1920" textLength="17.800" lengthAdjust="spacingAndGlyphs">EU</text>
<text class="r" x="795.400" y="1920" textLength="57.400" lengthAdjust="spacingAndGlyphs">Malaysia</text>
<text class="r" x="970" y="1920" textLength="44.800" lengthAdjust="spacingAndGlyphs">Mexico</text>
<!-- row 2 -->
<g><rect x="238" y="1938" width="25" height="16" fill="#0a3d91"/><text x="250.500" y="1950" font-size="11" font-weight="700" fill="#fff" text-anchor="middle">NC</text></g>
<g><circle cx="417" cy="1946" r="2" fill="#2a6fa8"/><rect x="421" y="1944" width="12" height="4" fill="#c6cdd4"/></g>
<g><path d="M587 1938H612V1946H587Z" fill="#0d3fa6"/><path d="M587 1946H612V1954H587Z" fill="#dc1f26"/><path d="M587 1938L602 1946L587 1954Z" fill="#fff"/><circle cx="592" cy="1946" r="2.200" fill="#f5c92a"/></g>
<g><rect x="761.500" y="1938" width="25" height="5.400" fill="#f2f2f2"/><rect x="761.500" y="1943.400" width="25" height="5.300" fill="#1339a4"/><rect x="761.500" y="1948.700" width="25" height="5.300" fill="#d5182a"/></g>
<g><circle cx="949" cy="1946" r="4.600" fill="#cd2e3a"/><path d="M944.400 1946a4.600 4.600 0 0 0 9.200 0a2.300 2.300 0 0 0-4.600 0a2.300 2.300 0 0 1-4.600 0" fill="#0047a0"/><path d="M940 1941L943 1939M955 1939L958 1942M940 1951L943 1953M955 1953L958 1950" stroke="#222" stroke-width="2"/></g>
<text class="r" x="271.300" y="1952" textLength="107" lengthAdjust="spacingAndGlyphs">Nordic Countries</text>
<text class="r" x="445.800" y="1952" textLength="38.500" lengthAdjust="spacingAndGlyphs">OECD</text>
<text class="r" x="621" y="1952" textLength="69.500" lengthAdjust="spacingAndGlyphs">Philippines</text>
<text class="r" x="795.400" y="1952" textLength="43" lengthAdjust="spacingAndGlyphs">Russia</text>
<text class="r" x="970" y="1952" textLength="113" lengthAdjust="spacingAndGlyphs">Republic of Korea</text>
<!-- row 3 -->
<g><rect x="238" y="1970" width="25" height="16" fill="#dc1526"/><rect x="238" y="1970" width="12.500" height="8" fill="#12369a"/><circle cx="244.200" cy="1974" r="2.400" fill="#fff"/></g>
<g><rect x="413" y="1970" width="25" height="16" fill="#fff"/><path d="M413 1971.400h25M413 1984.600h25" stroke="#c8202f" stroke-width="2.800"/><rect x="413" y="1975.300" width="25" height="5.400" fill="#1f3f98"/></g>
<g><rect x="587" y="1970" width="25" height="16" fill="#e01a24"/><circle cx="596" cy="1978" r="3.800" fill="#fff"/><circle cx="597" cy="1978" r="3" fill="#e01a24"/><circle cx="601" cy="1978" r="1.200" fill="#fff"/></g>
<g><rect x="761.500" y="1970" width="25" height="16" fill="#fff"/><path d="M761.500 1971.500h25M761.500 1974.500h25M761.500 1977.500h25M761.500 1980.500h25M761.500 1983.500h25" stroke="#cf2b3c" stroke-width="1.300"/><rect x="761.500" y="1970" width="12" height="9" fill="#3a4f9c"/></g>
<g><rect x="936.500" y="1970" width="25" height="16" fill="#da1b24"/><path d="M949 1973L950.500 1976.800H954.500L951.300 1979.200L952.400 1983L949 1980.800L945.600 1983L946.700 1979.200L943.500 1976.800H947.500Z" fill="#ffde00"/></g>
<text class="r" x="271.300" y="1984" textLength="93.600" lengthAdjust="spacingAndGlyphs">Chinese Taipei</text>
<text class="r" x="445.800" y="1984" textLength="56.800" lengthAdjust="spacingAndGlyphs">Thailand</text>
<text class="r" x="621" y="1984" textLength="42" lengthAdjust="spacingAndGlyphs">Turkey</text>
<text class="r" x="795.400" y="1984" textLength="87" lengthAdjust="spacingAndGlyphs">United States</text>
<text class="r" x="970" y="1984" textLength="54" lengthAdjust="spacingAndGlyphs">Vietnam</text>
</svg>
</body></html>
